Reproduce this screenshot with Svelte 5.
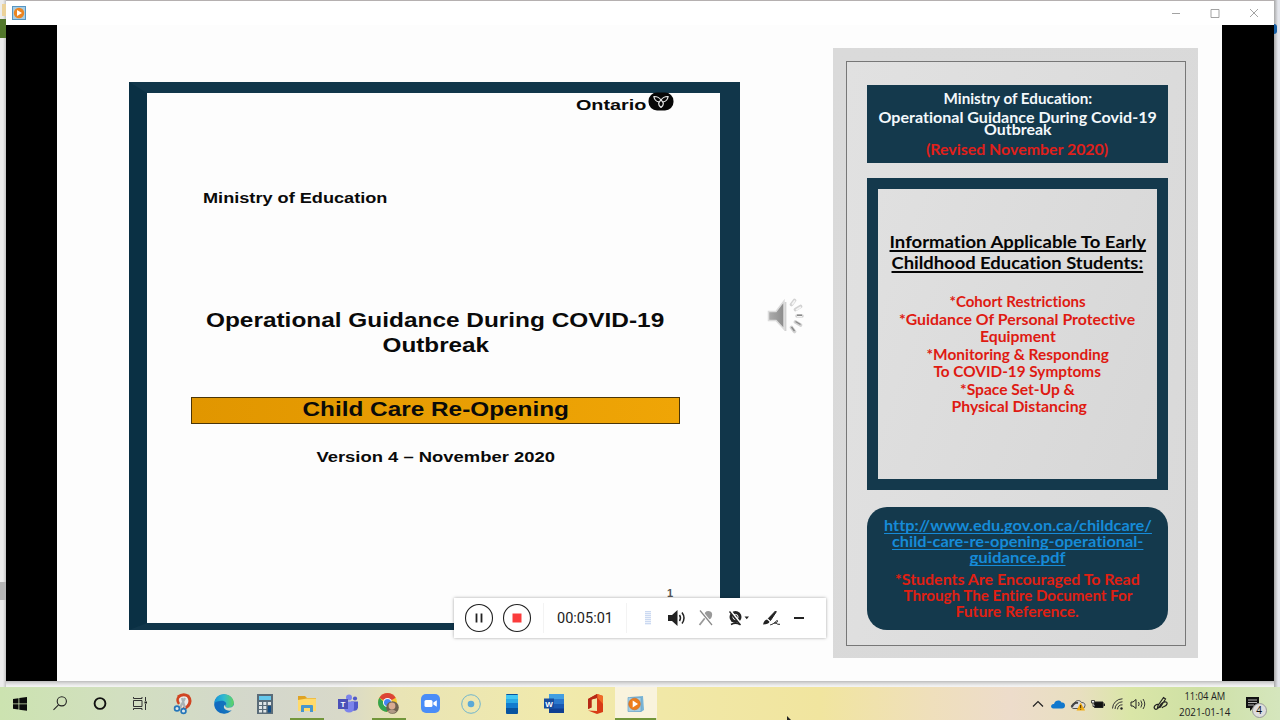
<script>
    //Lines of text on the slide, each with the width in pixels it fills
    const titleLines = [
        {text: "Ministry of Education:", width: 149, kind: "first"},
        {text: "Operational Guidance During Covid-19", width: 278, kind: "second"},
        {text: "Outbreak", width: 67, kind: "third"},
        {text: "(Revised November 2020)", width: 182, kind: "revised"}
    ];

    const headingLines = [
        {text: "Information Applicable To Early", width: 257},
        {text: "Childhood Education Students:", width: 252}
    ];

    const topicLines = [
        {text: "*Cohort Restrictions", width: 136},
        {text: "*Guidance Of Personal Protective", width: 236},
        {text: "Equipment", width: 76},
        {text: "*Monitoring & Responding", width: 182},
        {text: "To COVID-19 Symptoms", width: 167},
        {text: "*Space Set-Up &", width: 115},
        {text: "Physical Distancing", width: 135, shifted: true}
    ];

    const linkLines = [
        {text: "http://www.edu.gov.on.ca/childcare/", width: 268},
        {text: "child-care-re-opening-operational-", width: 251},
        {text: "guidance.pdf", width: 96}
    ];

    const noteLines = [
        {text: "*Students Are Encouraged To Read", width: 245},
        {text: "Through The Entire Document For", width: 229},
        {text: "Future Reference.", width: 123}
    ];

    //Pinned and running apps on the taskbar
    const apps = ["snip", "edge", "calculator", "explorer", "teams", "chrome", "zoom", "capture", "phone", "word", "office", "player"];
    const running = ["explorer", "chrome", "player"];

    //Stretches a line horizontally until it fills the given width
    const fit = (node, width)=>{
        node.style.transform = `scaleX(${width / node.offsetWidth})`;
    }
</script>

{#snippet playerIcon()}
    <svg width="18" height="18" viewBox="0 0 18 18">
        <path d="M3 2 L16 1 L17 15 L14 17 L2 16 Z" fill="#79b4d6"/>
        <path d="M1 2.500h13v14H1z" fill="#a5cfe4" stroke="#6ba5c8" stroke-width=".7"/>
        <circle cx="7.500" cy="9" r="5.800" fill="#ed7d1c" stroke="#cf6515" stroke-width=".6"/>
        <path d="M5.700 5.500v7l5.300-3.500z" fill="#fff"/>
    </svg>
{/snippet}

<div class="screen">
    <div class="desktop">
        <div class="edge-left"><i class="folder"></i><i class="ribbon"></i><i class="scroll"></i></div>

        <div class="window">
            <header>
                <svg width="14" height="14" viewBox="0 0 14 14">
                    <rect x=".5" y=".5" width="13" height="13" fill="#a9cde2" stroke="#5595c4"/>
                    <circle cx="7" cy="7" r="5.200" fill="#ec8522"/>
                    <path d="M5 4v6l5-3z" fill="#fff"/>
                </svg>
                <div class="controls">
                    <svg width="10" height="10" viewBox="0 0 10 10"><path d="M1 5.500h8"/></svg>
                    <svg width="10" height="10" viewBox="0 0 10 10"><path d="M1 1.500h8v8h-8z"/></svg>
                    <svg width="10" height="10" viewBox="0 0 10 10"><path d="M1 1l8 8M9 1l-8 8"/></svg>
                </div>
            </header>

            <main>
                <div class="document">
                    <div class="logo">
                        <span use:fit={70}>Ontario</span>
                        <svg width="26" height="19" viewBox="0 0 26 19">
                            <rect x=".5" y=".5" width="25" height="18" rx="8.500" fill="#070707"/>
                            <g fill="none" stroke="#e8e8e8" stroke-width="1.200" stroke-linejoin="round">
                                <path d="M13 8C11 5 9 4.300 5.800 4.500 6.500 8 8 9.500 10.800 9.800M13 8c2-3 4-3.700 7.200-3.500C19.500 8 18 9.500 15.200 9.800M13 8c-3 2.500-3.200 5 0 7.500 3.200-2.500 3-5 0-7.500z"/>
                            </g>
                        </svg>
                    </div>
                    <p class="ministry"><span use:fit={184}>Ministry of Education</span></p>
                    <h1><span use:fit={458}>Operational Guidance During COVID-19</span><span use:fit={107}>Outbreak</span></h1>
                    <div class="banner"><span use:fit={266}>Child Care Re-Opening</span></div>
                    <p class="version"><span use:fit={238}>Version 4 – November 2020</span></p>
                    <p class="page-number">1</p>
                </div>

                <!--Audio clip placed on the slide-->
                <svg class="audio" width="42" height="42" viewBox="0 0 42 42">
                    <defs>
                        <linearGradient id="grey" x2="1"><stop stop-color="#adadad"/><stop offset="1" stop-color="#8b8b8b"/></linearGradient>
                    </defs>
                    <path d="M3.500 13.500h7.500l8-10.500v28l-8-8.500H3.500z" fill="url(#grey)" stroke="#dcdcdc" stroke-width="1.500"/>
                    <path d="M20.500 4v29" stroke="#d2d2d2" stroke-width="1.800"/>
                    <g stroke="#d2d2d2" stroke-width="3.600" stroke-linecap="round">
                        <path d="M26.500 6.500l3-4M30.500 11.500l5-3M32 18h5M30.500 24l5 3M26.500 29.500l3 4"/>
                    </g>
                    <g stroke="#f4f4f4" stroke-width="1.600"><path d="M27 6.500l3-4M31 12l5-3M32 18.500h5"/></g>
                    <g stroke="#888" stroke-width="1.400"><path d="M30.500 23.500l5 3M26.500 29l3 4M32 17.200h5"/></g>
                </svg>

                <aside>
                    <div class="outline">
                        <div class="title">
                            {#each titleLines as line}
                                <span class={line.kind} use:fit={line.width}>{line.text}</span>
                            {/each}
                        </div>
                        <div class="topics">
                            <h2>{#each headingLines as line}<span use:fit={line.width}>{line.text}</span>{/each}</h2>
                            {#each topicLines as line}<span class:shifted={line.shifted} use:fit={line.width}>{line.text}</span>{/each}
                        </div>
                        <div class="source">
                            <div class="link">{#each linkLines as line}<span use:fit={line.width}>{line.text}</span>{/each}</div>
                            {#each noteLines as line}<span use:fit={line.width}>{line.text}</span>{/each}
                        </div>
                    </div>
                </aside>
            </main>
        </div>

        <div class="edge-right"><i></i></div>

        <!--Floating screen recorder bar-->
        <div class="recorder">
            <svg width="30" height="30" viewBox="0 0 30 30"><circle cx="15" cy="15" r="13.500" fill="none" stroke="#222" stroke-width="1.100"/><path d="M12.500 10.500v9M17.500 10.500v9" stroke="#222" stroke-width="1.800"/></svg>
            <svg class="stop" width="30" height="30" viewBox="0 0 30 30"><circle cx="15" cy="15" r="13.500" fill="none" stroke="#222" stroke-width="1.100"/><path d="M10.500 10.500h9v9h-9z" fill="#fb3c3c"/></svg>
            <div class="time"><span use:fit={56}>00:05:01</span></div>
            <div class="meter"></div>
            <svg class="speaker" width="20" height="18" viewBox="0 0 20 18"><path d="M1 6h4l5.500-5v16L5 12H1z" fill="#222"/><path d="M12.500 6q2 3 0 6M15 3.500q4 5.500 0 11" fill="none" stroke="#222" stroke-width="1.500"/></svg>
            <svg class="mic" width="16" height="18" viewBox="0 0 16 18"><path d="M6 7.500Q6 2 10.500 2 15 2.500 14 7q-.8 3.500-4 3.500z" fill="#999"/><path d="M7 9l-5.500 7" stroke="#999" stroke-width="1.800"/><path d="M2 1l12 15" stroke="#fff" stroke-width="3"/><path d="M2 1.500l12 14.500" stroke="#888" stroke-width="1.200"/></svg>
            <svg class="camera" width="22" height="18" viewBox="0 0 22 18"><circle cx="7.500" cy="8" r="6" fill="#222"/><circle cx="7.500" cy="8" r="2.600" fill="none" stroke="#fff"/><path d="M3 15.500q4.500-2.500 9 0" stroke="#222" stroke-width="1.600" fill="none"/><path d="M2.500 2l10.500 13" stroke="#fff" stroke-width="2.200"/><path d="M1.500 2.500L12.500 16" stroke="#222" stroke-width="1.300"/><path d="M16.500 7.500h4.500l-2.250 2.800z" fill="#222"/></svg>
            <svg class="pen" width="19" height="18" viewBox="0 0 19 18"><path d="M1 15.500q1-4.500 4-5l2.500 2.300Q6.500 15.500 1 15.500z" fill="#222"/><path d="M6.300 9.500L13.500 2l.8.800-5.800 8.700z" fill="#222" stroke="#222"/><path d="M8 15.800c4 0 7.500-6 7.500-3.800s-4 3-3 1.800 2 2.300 5.500 1.500" fill="none" stroke="#222" stroke-width="1"/></svg>
            <i class="minimise"></i>
        </div>
    </div>

    <footer>
        <svg class="system" viewBox="0 0 40 33"><path d="M13 12l5.500-.8v5.300H13zM19.300 11l7.700-1v6.500h-7.700zM13 17.300h5.500v5.300L13 21.800zM19.300 17.300H27v6.500l-7.700-1z" fill="#0b0b0b"/></svg>
        <svg class="system" viewBox="0 0 40 33"><circle cx="21.800" cy="14.300" r="4.600" fill="none" stroke="#222" stroke-width="1.100"/><path d="M18.500 17.800L13.500 22.800" stroke="#222" stroke-width="1.100"/></svg>
        <svg class="system" viewBox="0 0 40 33"><circle cx="20" cy="16.500" r="5.400" fill="none" stroke="#111" stroke-width="1.900"/></svg>
        <svg class="system" viewBox="0 0 40 33"><path d="M13.500 13.500h8.500v6h-8.500zM13.500 10v1.500H22V10M13.500 23v-1.500H22V23M25.500 10v4M25.500 17v6" fill="none" stroke="#333"/><path d="M24.500 14.500h2.500v2h-2.500z" fill="#222"/></svg>
        <i class="gap"></i>

        {#each apps as app}
            <div class="app {app}" class:running={running.includes(app)}>
                {#if app == "snip"}
                    <svg width="20" height="22" viewBox="0 0 20 22"><path d="M5 4Q10 0 15 3q4 5 0 10-2 2-5 2.500" fill="#e9ebe9" stroke="#d04422" stroke-width="3"/><path d="M6 3.500Q3 7 6 11" fill="none" stroke="#d04422" stroke-width="2.500"/><path d="M12 5l-5 10M9 5l3 10" stroke="#a9b2b5" stroke-width="2.200"/><g fill="#dfe8ea" stroke="#2576b9" stroke-width="1.700"><circle cx="4" cy="15.500" r="2.400"/><circle cx="10.500" cy="18" r="2.400"/></g></svg>
                {:else if app == "edge"}
                    <svg width="20" height="20" viewBox="0 0 20 20"><defs><linearGradient id="sea" x2="1"><stop stop-color="#1794d8"/><stop offset=".5" stop-color="#30bad0"/><stop offset="1" stop-color="#5fd35f"/></linearGradient></defs><circle cx="10" cy="10" r="9.800" fill="#1373bd"/><path d="M.3 9C1 3 5 .2 10 .2c6 0 9.800 4.300 9.800 8.500 0 3-2.300 5-5.300 5-2.500 0-4-.9-2.700-2.200 1.500-2.500-1-5-4-4.800C4 6.700 1 8 .3 9z" fill="url(#sea)"/><path d="M11.500 10.500c-1 2 .5 3.200 3 3.200 2.300 0 4-.8 5.500-2.500v4.300c-1 .3-4 1.800-7 .8-3-1-4.500-4-1.500-5.800z" fill="#d7dccb"/><path d="M6.500 8C4 13 7 18 12 19 7 20 1 16.500.5 11 .8 8.500 3.500 7.500 6.500 8z" fill="#126ac0"/></svg>
                {:else if app == "calculator"}
                    <svg width="16" height="20" viewBox="0 0 16 20"><path d="M0 0h16v20H0z" fill="#5a6b78"/><path d="M2 2h12v4H2z" fill="#65c8ec"/><path d="M2 8h3v3H2zM6.300 8h3v3h-3zM2 12h3v3H2zM6.300 12h3v3h-3zM2 16h3v2.500H2zM6.300 16h3v2.500h-3zM10.800 8H14v3h-3.200z" fill="#e0e5e7"/><path d="M10.800 12H14v6.500h-3.200z" fill="#114c86"/></svg>
                {:else if app == "explorer"}
                    <svg width="20" height="18" viewBox="0 0 20 18"><path d="M1 1h7l2 2h9v13H1z" fill="#dfa324"/><path d="M1 5l9-1.500h9V16H1z" fill="#ffda6a"/><path d="M4 17v-6q0-1 1-1h10q1 0 1 1v6h-3v-4H7v4z" fill="#4796cc"/></svg>
                {:else if app == "teams"}
                    <svg width="20" height="20" viewBox="0 0 20 20"><circle cx="11" cy="3.500" r="3" fill="#7b83eb"/><circle cx="17" cy="4.500" r="2.100" fill="#5059c9"/><path d="M13 7.500h7v6q-1 4-5 3z" fill="#5059c9"/><path d="M6 7.500h10v6q0 5-5 5-4 0-5-4z" fill="#7b83eb"/><path d="M0 5h10v10H0z" fill="#4b50b8"/><text x="2.500" y="13" font-size="8">T</text></svg>
                {:else if app == "chrome"}
                    <svg width="21" height="21" viewBox="0 0 21 21"><circle cx="9.500" cy="9.500" r="9.500" fill="#f5ca31"/><path d="M1.300 4.800A9.500 9.500 0 0 1 17.700 4.800L9.500 9.500z" fill="#dc4437"/><path d="M1.300 4.800A9.500 9.500 0 0 0 9 19l3-6-4-2z" fill="#33a452"/><circle cx="9.500" cy="9.500" r="4.500" fill="#fff"/><circle cx="9.500" cy="9.500" r="3.500" fill="#4285f4"/><circle cx="14.500" cy="14.500" r="6.300" fill="#6f6250"/><circle cx="14" cy="13" r="3.400" fill="#d9ab91"/><path d="M9.500 18.500q4-4 9 0-4 3-9 0z" fill="#b09a86"/></svg>
                {:else if app == "zoom"}
                    <svg width="19" height="19" viewBox="0 0 19 19"><rect width="19" height="19" rx="5" fill="#4a8df7"/><rect x="3.500" y="6" width="8" height="7" rx="1.500" fill="#fff"/><path d="M12.300 8.500l3.500-2.300v6.600l-3.500-2.300z" fill="#fff"/></svg>
                {:else if app == "capture"}
                    <svg width="20" height="20" viewBox="0 0 20 20"><circle cx="10" cy="10" r="9.300" fill="none" stroke="#70b5cd"/><circle cx="10" cy="10" r="3.300" fill="#5ba9d7"/></svg>
                {:else if app == "phone"}
                    <svg width="12" height="20" viewBox="0 0 12 20"><rect width="12" height="20" rx="1" fill="#0754a0"/><path d="M0 1h12v4H0z" fill="#42c7f2"/><path d="M0 5h12v4H0z" fill="#2baae5"/><path d="M0 9h12v5H0z" fill="#127bce"/></svg>
                {:else if app == "word"}
                    <svg width="20" height="19" viewBox="0 0 20 19"><path d="M5 0h15v5H5z" fill="#419ee2"/><path d="M5 5h15v5H5z" fill="#2b78cc"/><path d="M5 10h15v5H5z" fill="#1959b3"/><path d="M5 14.500h15V19H5z" fill="#103f91"/><path d="M0 4.500h10v10H0z" fill="#174d9f"/><text x="1.200" y="12.500" font-size="8">W</text></svg>
                {:else if app == "office"}
                    <svg width="16" height="20" viewBox="0 0 16 20"><path d="M10 0l6 2v16l-6 2-9-3.500 9 .5V4L4.500 5.500v8L1 15V5z" fill="#d83b16"/><path d="M10 0v4L4.500 5.500v8L1 15V5z" fill="#b62915"/><path d="M10.500 0L16 2v8l-5.500-6z" fill="#ef6a27"/></svg>
                {:else}
                    {@render playerIcon()}
                {/if}
            </div>
        {/each}

        <div class="tray">
            <svg viewBox="0 0 20 20"><path d="M5 12.500l5-5 5 5" fill="none" stroke="#222" stroke-width="1.200"/></svg>
            <svg viewBox="0 0 20 20"><path d="M5.500 14.500C2 14.500 2.500 9.500 6 10c1-4 6-4.500 7.500-1.500 3 0 3.500 1.500 3.500 3q0 3-3 3z" fill="#1178cd"/></svg>
            <svg viewBox="0 0 20 20"><path d="M6 14.500C2 14.500 3 9.500 6 10c1-4 6-4.500 7.500-1.500 3 0 3.500 1.500 3.500 3q0 3-3 3z" fill="#ddd" stroke="#555"/><path d="M4 13q2-5 6-4" fill="none" stroke="#444" stroke-width="2"/><path d="M12.700 8.500L17 16.500H8.500z" fill="#f3ae15"/><path d="M12.700 11v3M12.700 14.800v.8" stroke="#423000"/></svg>
            <svg viewBox="0 0 20 20"><path d="M6.500 8h8.500v5.500H6.500z" fill="#111" stroke="#222"/><path d="M15.500 9.500H17V12h-1.500z" fill="#222"/><path d="M3.500 6.500h3v2.500h-3zM5 9v3.500h2" fill="#eee" stroke="#222" stroke-width=".8"/></svg>
            <svg viewBox="0 0 20 20"><g fill="none" stroke="#333" stroke-width="1"><path d="M4.500 14.500A10 10 0 0 1 14.500 4.800M7 15A7.500 7.500 0 0 1 14.500 7.800M9.500 15.300A5 5 0 0 1 14.500 10.800"/></g><circle cx="13.500" cy="14.500" r="1.200" fill="#222"/></svg>
            <svg viewBox="0 0 20 20"><path d="M3 8h2L8 5.500v9L5 12H3z" fill="none" stroke="#222" stroke-width="1"/><path d="M10.500 8q1.300 2 0 4M12.800 6.500q2.500 3.500 0 7M15 5q3.500 5 0 10" fill="none" stroke="#333" stroke-width="1"/></svg>
            <svg class="ink" viewBox="0 0 20 20"><path d="M7 11.500l5.500-8L14.500 5l-5 8-3 1zM8 10C4 10 2 13.500 4 15s5-3 6-5c2-2.500 7-3 6 0s-4 2-5 4" fill="none" stroke="#222" stroke-width="1.200"/></svg>
        </div>
        <div class="clock"><span use:fit={41}>11:04 AM</span><span use:fit={51}>2021-01-14</span></div>
        <div class="notifications">
            <svg width="13" height="14" viewBox="0 0 13 14"><path d="M0 0h13v11H7l-3 3v-3H0z" fill="#111"/><path d="M2 3h9M2 5.500h9M2 8h6" stroke="#ddd" stroke-width=".8"/></svg>
            <b>4</b>
        </div>
        <!--Tip of the mouse pointer-->
        <svg class="pointer" width="4" height="4" viewBox="0 0 4 4"><path d="M0 0l4 4H0z" fill="#222"/></svg>
    </footer>
</div>

<style>
    :global(body){
        margin: 0;
        overflow: hidden;
    }

    .screen{
        width: 1280px;
        height: 720px;
        overflow: hidden;
        display: flex;
        flex-direction: column;
        font-family: "Liberation Sans", Arial, sans-serif;
        font-variant-ligatures: none;
        color: #0a0a0a;
    }

    .screen p, h1, h2{
        margin: 0;
        font-weight: bold;
    }

    span{
        display: block;
        width: max-content;
        white-space: nowrap;
    }

    /*Desktop and what shows around the player window*/
    .desktop{
        position: relative;
        display: flex;
        height: 687px;
        background: linear-gradient(#eee 680px, #bcbcbc 681px, #d8d8d8 683px, #f2f2f2 686px);
    }

    .edge-left{
        width: 6px;
        display: flex;
        flex-direction: column;
        background: linear-gradient(90deg, #ececec 3px, #c4c4c4);
    }

    .folder{
        height: 12px;
        margin: 4px 0 3px 2px;
        background: #ecd299;
    }

    .ribbon{
        height: 19px;
        background: #52772b;
    }

    .scroll{
        height: 18px;
        margin-top: 544px;
        background: #b5b5b5;
    }

    .edge-right{
        width: 6px;
        background: linear-gradient(90deg, #a8a8a8, #e4e6ec 4px);
    }

    .edge-right i{
        display: block;
        width: 3px;
        height: 10px;
        margin-top: 24px;
        border-radius: 0 5px 5px 0;
        background: #175fa4;
    }

    .window{
        width: 1268px;
        height: 681px;
        box-sizing: border-box;
        border-top: 1px solid #b5b0b0;
        background: #fff;
    }

    header{
        display: flex;
        justify-content: space-between;
        height: 24px;
        padding: 0 15px 0 6px;
        align-items: center;
    }

    .controls{
        display: flex;
        gap: 29px;
        fill: none;
        stroke: #999;
        stroke-width: .9;
    }

    /*Slide with black bars on both sides*/
    main{
        display: flex;
        align-items: flex-start;
        box-sizing: border-box;
        height: 656px;
        padding-left: 72px;
        border: solid #000;
        border-width: 0 52px 0 51px;
        background: #fdfdfd;
    }

    .document{
        box-sizing: border-box;
        width: 611px;
        height: 548px;
        margin-top: 57px;
        padding-left: 4px;
        border: solid #11364a;
        border-width: 11px 20px 7px 18px;
        border-left-color: #0a3044;
        background: #fdfdfd;
        display: flex;
        flex-direction: column;
        align-items: center;
    }

    .logo{
        align-self: flex-end;
        display: flex;
        height: 19px;
        margin: -1px 46px 0 0;
        gap: 2px;
        font-size: 15px;
        font-weight: bold;
        line-height: 25px;
    }

    .logo span{
        transform-origin: right;
    }

    .document .ministry{
        align-self: flex-start;
        margin: 79px 0 0 52px;
        font-size: 14px;
        line-height: 16px;
    }

    .ministry span{
        transform-origin: left;
    }

    h1{
        display: flex;
        flex-direction: column;
        align-items: center;
        margin-top: 102px;
        font-size: 19.5px;
        line-height: 24.5px;
    }

    .banner{
        display: flex;
        justify-content: center;
        width: 487px;
        height: 25px;
        margin-top: 40px;
        border: 1px solid #4a3508;
        background: linear-gradient(90deg, #e19600, #efa506);
        font-size: 19.5px;
        font-weight: bold;
        line-height: 22px;
    }

    .document .version{
        margin-top: 25px;
        font-size: 14px;
        line-height: 16px;
    }

    .document .page-number{
        align-self: flex-end;
        margin: 121px 47px 0 0;
        font-size: 11px;
        line-height: 14px;
        color: #555;
    }

    .audio{
        margin: 273px 0 0 25px;
    }

    /*Grey column on the right of the slide*/
    aside{
        box-sizing: border-box;
        width: 365px;
        height: 610px;
        margin: 23px 0 0 26px;
        padding: 13px 12px 12px 13px;
        background: linear-gradient(135deg, #dadada, #d9d9d9);
        font-family: Lato, "Century Gothic", sans-serif;
        font-weight: bold;
    }

    .outline{
        box-sizing: border-box;
        height: 585px;
        padding: 23px 17px 0 20px;
        border: 1px solid #777;
        background: linear-gradient(100deg, #e1e1e1, #d9d9d9);
    }

    .title, .topics, .source, h2, .link{
        display: flex;
        flex-direction: column;
        align-items: center;
    }

    .title{
        height: 78px;
        background: #14394c;
        color: #f3f8fb;
        font-size: 14.5px;
        line-height: 12px;
    }

    .first{
        margin-top: 8px;
    }

    .second{
        margin-top: 7px;
    }

    .revised{
        margin-top: 8px;
        color: #e01f1a;
    }

    .topics{
        box-sizing: border-box;
        height: 312px;
        margin-top: 15px;
        padding-top: 42px;
        border: 11px solid #14394c;
        background: linear-gradient(110deg, #e0e0e0, #d7d7d7);
        color: #df1a12;
        font-size: 14.5px;
        line-height: 17.5px;
    }

    .shifted{
        margin-left: 4px;
    }

    h2{
        margin-bottom: 20px;
        color: #050505;
        font-size: 17px;
        line-height: 21px;
        text-decoration: underline;
        text-decoration-thickness: 1.5px;
        text-underline-offset: 2px;
        text-decoration-skip-ink: none;
    }

    .source{
        box-sizing: border-box;
        height: 123px;
        margin-top: 17px;
        padding-top: 11px;
        border-radius: 20px;
        background: #14394c;
        color: #e01f12;
        font-size: 14.5px;
        line-height: 15.8px;
    }

    .link{
        margin-bottom: 7px;
        color: #168bd8;
        text-decoration: underline;
        text-decoration-thickness: 1.3px;
        text-underline-offset: 2px;
        text-decoration-skip-ink: none;
    }

    /*Recorder bar lies over the slide*/
    .recorder{
        position: absolute;
        left: 454px;
        top: 598px;
        box-sizing: border-box;
        width: 372px;
        height: 40px;
        padding-left: 9.5px;
        display: flex;
        align-items: center;
        background: #fff;
        box-shadow: 0 0 3px rgba(0, 0, 0, .35);
    }

    .stop{
        margin-left: 8px;
    }

    .time{
        display: flex;
        justify-content: center;
        width: 82px;
        margin-left: 11.5px;
        border: solid #f3f3f3;
        border-width: 0 1px;
        color: #222;
        font-family: Roboto, sans-serif;
        font-size: 14px;
        line-height: 30px;
    }

    .meter{
        width: 6px;
        height: 14px;
        margin-left: 18px;
        background: repeating-linear-gradient(#cbd9f1 0 1px, #edf2fb 1px 2px);
    }

    .speaker{
        margin-left: 16px;
    }

    .mic{
        margin-left: 10.5px;
    }

    .camera{
        margin-left: 14px;
    }

    .pen{
        margin-left: 12px;
    }

    .minimise{
        width: 10px;
        height: 1.5px;
        margin-left: 13.5px;
        background: #222;
    }

    /*Taskbar*/
    footer{
        position: relative;
        display: flex;
        height: 33px;
        background: linear-gradient(90deg, #cce3b0, #d2dfc0 120px, #d4d7cc 260px, #d8d9c9 340px, #e9e4b5 400px, #f1eaac 560px, #f1e59f 820px, #efdfbb 930px, #eddccb 1010px, #e8dfc0 1080px, #dae6a7 1130px, #cee0a5 1200px, #d5e6bd);
    }

    .system{
        width: 40px;
        height: 33px;
    }

    .gap{
        width: 2.4px;
    }

    .app{
        display: flex;
        align-items: center;
        justify-content: center;
        width: 41.2px;
    }

    .app text{
        fill: #fff;
        font-weight: bold;
    }

    .running{
        background: linear-gradient(#72963a, #72963a) center bottom / 34px 2px no-repeat;
    }

    .player{
        background-color: #f9f3dd;
        background-size: 41.2px 2px;
    }

    .tray{
        display: flex;
        align-items: center;
        margin-left: 371px;
    }

    .tray svg{
        width: 20px;
        height: 20px;
    }

    .tray .ink{
        margin-left: 3px;
    }

    .clock{
        display: flex;
        flex-direction: column;
        align-items: center;
        width: 52px;
        margin: 1px 0 0 8px;
        font-family: "Open Sans", "Segoe UI", sans-serif;
        font-size: 11px;
        line-height: 15.5px;
        color: #222;
    }

    .notifications{
        position: relative;
        margin: 10px 0 0 15px;
    }

    .notifications b{
        position: absolute;
        left: 6px;
        top: 6px;
        width: 13px;
        height: 13px;
        border: 1px solid #999;
        border-radius: 50%;
        background: #ddd;
        font: 10px/13px "Open Sans", sans-serif;
        text-align: center;
    }

    .pointer{
        position: absolute;
        left: 787px;
        top: 29px;
    }
</style>
